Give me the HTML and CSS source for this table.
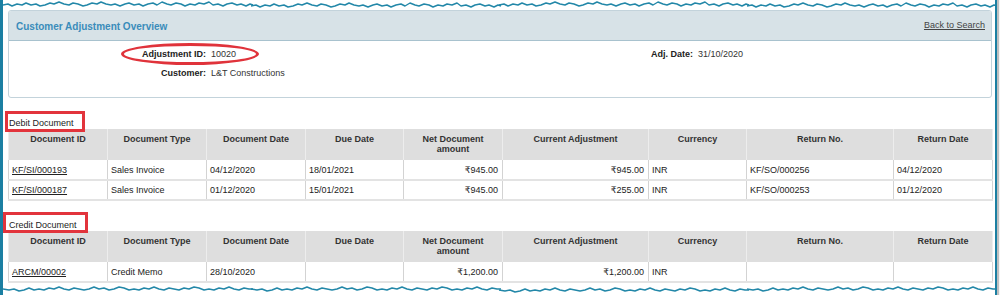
FILE: index.html
```html
<!DOCTYPE html>
<html>
<head>
<meta charset="utf-8">
<link rel="stylesheet" href="styles.css">
</head>
<body>
<div class="page">
  <svg class="edge edge-top" width="992" height="10" viewBox="0 0 992 10">
    <defs>
      <path id="wt" d="M0,5 L5,4 L9,6 L14,4 L19,5 L23,3 L28,5 L33,4 L37,6 L42,5 L47,3 L51,4 L56,2 L61,4 L66,5 L70,3 L75,4 L80,6 L84,5 L89,3 L94,4 L98,2 L103,4 L108,5 L112,4 L117,6 L122,4 L126,3 L131,5 L136,4 L140,6 L145,4 L150,3 L154,5 L159,2 L164,4 L168,5 L173,3 L178,4 L182,6 L187,4 L192,5 L196,3 L201,4 L206,2 L210,5 L215,4 L220,6 L224,4 L229,3 L234,5 L238,4 L243,6 L247,4 L250,5"/>
    </defs>
    <use href="#wt"/>
    <use href="#wt" transform="translate(248,1)"/>
    <use href="#wt" transform="translate(496,0)"/>
    <use href="#wt" transform="translate(744,1)"/>
  </svg>

  <main class="content">
    <section class="panel">
      <header class="panel-head">
        <span class="panel-title">Customer Adjustment Overview</span>
        <a class="back-link" href="#">Back to Search</a>
      </header>
      <div class="panel-body">
        <span class="ring"></span>
        <span class="lbl">Adjustment ID:</span>
        <span class="val">10020</span>
        <span class="lbl">Adj. Date:</span>
        <span class="val">31/10/2020</span>
        <span class="lbl">Customer:</span>
        <span class="val">L&amp;T Constructions</span>
      </div>
    </section>

    <div class="section-label"><span class="mark mark-debit">Debit Document</span></div>
    <table class="grid">
      <colgroup>
        <col class="c10"><col class="c10"><col class="c10"><col class="c10b"><col class="c10"><col class="c15"><col class="c10b"><col class="c15b"><col class="c10">
      </colgroup>
      <thead>
        <tr>
          <th>Document ID</th><th>Document Type</th><th>Document Date</th><th>Due Date</th><th>Net Document amount</th><th>Current Adjustment</th><th>Currency</th><th>Return No.</th><th>Return Date</th>
        </tr>
      </thead>
      <tbody>
        <tr>
          <td><a href="#">KF/SI/000193</a></td><td>Sales Invoice</td><td>04/12/2020</td><td>18/01/2021</td><td class="num">₹945.00</td><td class="num">₹945.00</td><td>INR</td><td>KF/SO/000256</td><td>04/12/2020</td>
        </tr>
        <tr>
          <td><a href="#">KF/SI/000187</a></td><td>Sales Invoice</td><td>01/12/2020</td><td>15/01/2021</td><td class="num">₹945.00</td><td class="num">₹255.00</td><td>INR</td><td>KF/SO/000253</td><td>01/12/2020</td>
        </tr>
      </tbody>
    </table>

    <div class="section-label section-label-credit"><span class="mark mark-credit">Credit Document</span></div>
    <table class="grid">
      <colgroup>
        <col class="c10"><col class="c10"><col class="c10"><col class="c10b"><col class="c10"><col class="c15"><col class="c10b"><col class="c15b"><col class="c10">
      </colgroup>
      <thead>
        <tr>
          <th>Document ID</th><th>Document Type</th><th>Document Date</th><th>Due Date</th><th>Net Document amount</th><th>Current Adjustment</th><th>Currency</th><th>Return No.</th><th>Return Date</th>
        </tr>
      </thead>
      <tbody>
        <tr>
          <td><a href="#">ARCM/00002</a></td><td>Credit Memo</td><td>28/10/2020</td><td></td><td class="num">₹1,200.00</td><td class="num">₹1,200.00</td><td>INR</td><td></td><td></td>
        </tr>
      </tbody>
    </table>
  </main>

  <svg class="edge edge-bottom" width="992" height="11" viewBox="0 0 992 11">
    <defs>
      <path id="wb" d="M0,5 L6,6 L11,5 L16,7 L21,6 L26,4 L31,6 L36,5 L41,6 L46,4 L51,5 L56,3 L61,5 L66,6 L71,4 L76,5 L81,6 L86,5 L91,3 L96,5 L101,4 L106,6 L111,5 L116,3 L121,4 L126,6 L131,5 L136,6 L141,4 L146,5 L151,3 L156,5 L161,6 L166,4 L171,5 L176,6 L181,4 L186,5 L191,3 L196,4 L201,6 L206,5 L211,6 L216,4 L221,5 L226,3 L231,5 L236,6 L241,4 L246,5 L250,5"/>
    </defs>
    <use href="#wb"/>
    <use href="#wb" transform="translate(248,0)"/>
    <use href="#wb" transform="translate(496,1)"/>
    <use href="#wb" transform="translate(744,0)"/>
  </svg>
</div>
</body>
</html>
```

FILE: styles.css
```css
*, *::before, *::after { box-sizing: border-box; }

html, body {
  margin: 0;
  padding: 0;
  background: #ffffff;
}

body {
  font-family: "Liberation Sans", Arial, "DejaVu Sans", sans-serif;
  font-size: 9px;
  color: #222;
}

.page {
  width: 997px;
  height: 295px;
  display: flex;
  flex-direction: column;
  border-left: 3px solid #1b7fa2;
  border-right: 2px solid #1b7fa2;
  box-shadow: 2px 0 1px rgba(0, 0, 0, 0.25);
  background: #fff;
}

.edge {
  display: block;
  flex: none;
  fill: none;
  stroke: #2287a8;
  stroke-width: 1.4;
  stroke-linejoin: round;
}

.edge-bottom { margin-top: auto; }

.content {
  padding: 0 3px 0 5px;
  display: flex;
  flex-direction: column;
}

/* Overview panel */
.panel {
  border: 1px solid #c3d3db;
  border-radius: 3px;
  overflow: hidden;
}

.panel-head {
  height: 30px;
  display: flex;
  align-items: center;
  justify-content: space-between;
  padding: 1px 6px 0 7px;
  background: #d7e2e7;
  border-bottom: 1px solid #a8c2ce;
}

.panel-title {
  font-size: 10px;
  font-weight: bold;
  color: #3a8cba;
}

.back-link {
  color: #444;
  text-decoration: underline;
  font-size: 9px;
  margin-top: -3px;
}

.panel-body {
  position: relative;
  height: 56px;
  display: grid;
  grid-template-columns: 197px 435px auto 1fr;
  grid-auto-rows: 12px;
  column-gap: 5px;
  row-gap: 7px;
  padding-top: 7px;
  line-height: 12px;
}

.lbl {
  font-weight: bold;
  text-align: right;
  color: #222;
}

.val { color: #333; }

.ring {
  position: absolute;
  left: 112px;
  top: 2px;
  width: 138px;
  height: 22px;
  border: 3px solid #e0333b;
  border-radius: 50%;
}

/* Section labels */
.section-label {
  margin-top: 19px;
  height: 12px;
  line-height: 12px;
  padding-left: 1px;
}

.section-label-credit { margin-top: 18px; }

.mark {
  position: relative;
  color: #222;
}

.mark::after {
  content: "";
  position: absolute;
  border: 3px solid #e2343c;
}

.mark-debit::after {
  left: -4px;
  top: -7px;
  width: 80px;
  height: 21px;
}

.mark-credit::after {
  left: -6px;
  top: -8px;
  width: 85px;
  height: 21px;
}

/* Tables */
.grid {
  width: 984px;
  border-collapse: collapse;
  table-layout: fixed;
}

.c10 { width: 99px; }
.c10b { width: 98px; }
.c15 { width: 146px; }
.c15b { width: 147px; }

.grid th {
  background: #dedede;
  color: #333;
  font-weight: bold;
  font-size: 9px;
  line-height: 10px;
  height: 31px;
  padding: 5px 14px 0;
  vertical-align: top;
  text-align: center;
  border-left: 1px solid #ededed;
  border-right: 1px solid #ededed;
}

.grid td {
  height: 20px;
  padding: 0 4px 0 3px;
  line-height: 12px;
  color: #222;
  background: #fff;
  border-left: 1px solid #d3d3d3;
  border-right: 1px solid #d3d3d3;
  border-bottom: 2px solid #e3e3e3;
  white-space: nowrap;
  vertical-align: middle;
}

.grid td.num { text-align: right; }

.grid td a {
  color: #222;
  text-decoration: underline;
}
```
